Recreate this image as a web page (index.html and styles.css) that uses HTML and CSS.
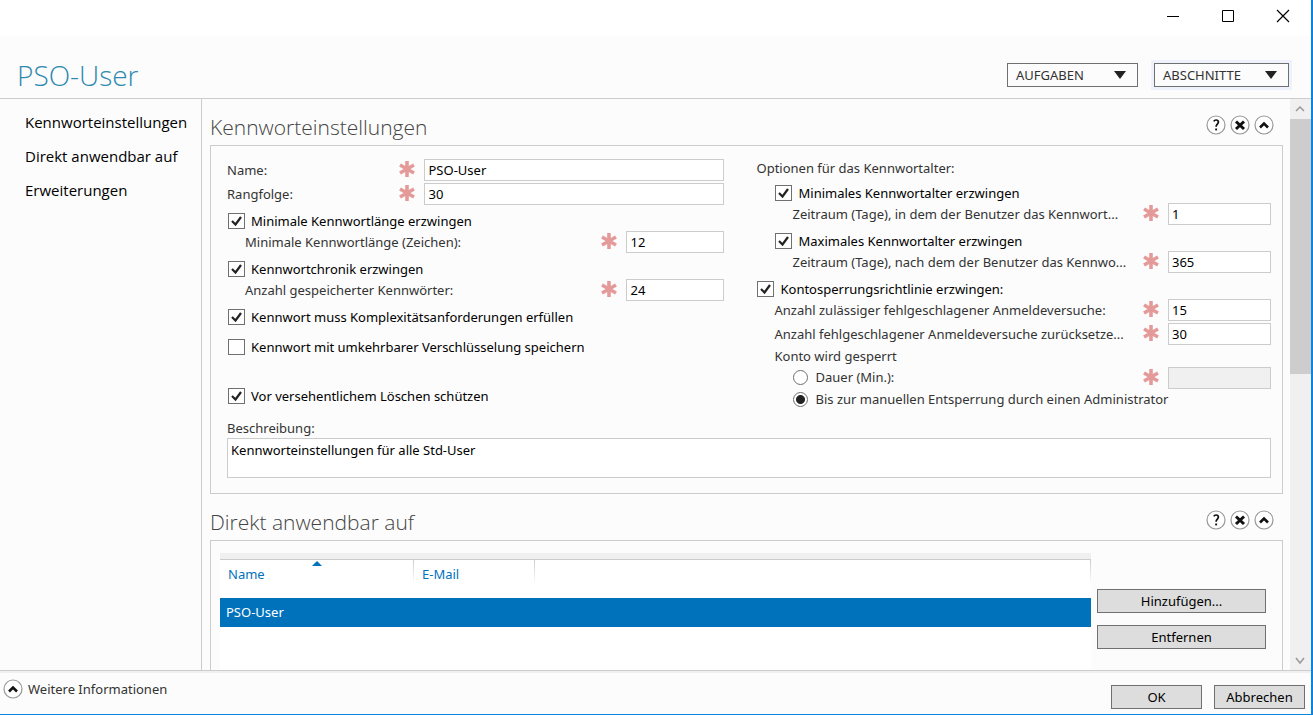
FILE: index.html
```html
<!DOCTYPE html>
<html lang="de">
<head>
    <meta charset="UTF-8">
    <meta name="viewport" content="width=device-width, initial-scale=1.0">
    <title>PSO-User</title>
    <link rel="stylesheet" href="styles.css">
</head>
<body>
    <!-- shared icons -->
    <svg class="defs" width="0" height="0">
        <symbol id="star" viewBox="0 0 18 18">
            <path d="M9 1v16M2 5l14 8M16 5L2 13" stroke="#e59a9a" stroke-width="3.6" fill="none"/>
        </symbol>
        <symbol id="help" viewBox="0 0 20 20">
            <circle cx="10" cy="10" r="9" fill="#fff" stroke="#999" stroke-width="1.2"/>
            <path d="M7.8 6.4C8.3 5.4 9 5 10 5c1.500 0 2.400.8 2.400 2.100 0 1.900-2.300 2.100-2.300 4.600" fill="none" stroke="#111" stroke-width="1.7"/>
            <path d="M9.200 13.500h1.900v1.900h-1.900z" fill="#111"/>
        </symbol>
        <symbol id="cross" viewBox="0 0 20 20">
            <circle cx="10" cy="10" r="9" fill="#fff" stroke="#999" stroke-width="1.2"/>
            <path d="M6 6.500l8 7.500M14 6.500L6 14" stroke="#111" stroke-width="3" fill="none"/>
        </symbol>
        <symbol id="up" viewBox="0 0 20 20">
            <circle cx="10" cy="10" r="9" fill="#fff" stroke="#999" stroke-width="1.2"/>
            <path d="M6 12.500l4-4 4 4" stroke="#111" stroke-width="2.600" fill="none"/>
        </symbol>
    </svg>

    <div class="window">
        <div class="titlebar">
            <button aria-label="Minimieren"><svg width="14" height="14"><path d="M1 7.500h12" stroke="#000"/></svg></button>
            <button aria-label="Maximieren"><svg width="14" height="14"><path d="M1.500 1.500h11v11h-11z" stroke="#000" fill="none"/></svg></button>
            <button aria-label="Schließen"><svg width="14" height="14"><path d="M1 1l12 12M13 1L1 13" stroke="#000" stroke-width="1.200"/></svg></button>
        </div>

        <header class="header">
            <h1>PSO-User</h1>
            <button class="menu">AUFGABEN <svg width="12" height="8"><path d="M0 0h12L6 8z" fill="#222"/></svg></button>
            <button class="menu focused">ABSCHNITTE <svg width="12" height="8"><path d="M0 0h12L6 8z" fill="#222"/></svg></button>
        </header>

        <div class="body">
            <nav class="sidebar">
                <a href="#settings">Kennworteinstellungen</a>
                <a href="#applies">Direkt anwendbar auf</a>
                <a href="#extensions">Erweiterungen</a>
            </nav>

            <main class="content">
                <section id="settings">
                    <div class="section-head">
                        <h2>Kennworteinstellungen</h2>
                        <button aria-label="Hilfe"><svg><use href="#help"/></svg></button>
                        <button aria-label="Entfernen"><svg><use href="#cross"/></svg></button>
                        <button aria-label="Reduzieren"><svg><use href="#up"/></svg></button>
                    </div>
                    <form class="panel">
                        <div class="columns">
                            <div class="left">
                                <div class="row">
                                    <label for="name">Name:</label>
                                    <svg class="star"><use href="#star"/></svg>
                                    <input type="text" id="name" class="wide" value="PSO-User">
                                </div>
                                <div class="row">
                                    <label for="rank">Rangfolge:</label>
                                    <svg class="star"><use href="#star"/></svg>
                                    <input type="text" id="rank" class="wide" value="30">
                                </div>
                                <label class="check"><input type="checkbox" checked>Minimale Kennwortlänge erzwingen</label>
                                <div class="row sub">
                                    <label for="minlen">Minimale Kennwortlänge (Zeichen):</label>
                                    <svg class="star"><use href="#star"/></svg>
                                    <input type="text" id="minlen" value="12">
                                </div>
                                <label class="check"><input type="checkbox" checked>Kennwortchronik erzwingen</label>
                                <div class="row sub">
                                    <label for="history">Anzahl gespeicherter Kennwörter:</label>
                                    <svg class="star"><use href="#star"/></svg>
                                    <input type="text" id="history" value="24">
                                </div>
                                <label class="check"><input type="checkbox" checked>Kennwort muss Komplexitätsanforderungen erfüllen</label>
                                <label class="check space"><input type="checkbox">Kennwort mit umkehrbarer Verschlüsselung speichern</label>
                                <label class="check space-big"><input type="checkbox" checked>Vor versehentlichem Löschen schützen</label>
                            </div>

                            <div class="right">
                                <div class="text">Optionen für das Kennwortalter:</div>
                                <div class="group">
                                    <label class="check"><input type="checkbox" checked>Minimales Kennwortalter erzwingen</label>
                                    <div class="row sub">
                                        <label for="minage">Zeitraum (Tage), in dem der Benutzer das Kennwort...</label>
                                        <svg class="star"><use href="#star"/></svg>
                                        <input type="text" id="minage" value="1">
                                    </div>
                                    <label class="check"><input type="checkbox" checked>Maximales Kennwortalter erzwingen</label>
                                    <div class="row sub">
                                        <label for="maxage">Zeitraum (Tage), nach dem der Benutzer das Kennwo...</label>
                                        <svg class="star"><use href="#star"/></svg>
                                        <input type="text" id="maxage" value="365">
                                    </div>
                                </div>
                                <label class="check"><input type="checkbox" checked>Kontosperrungsrichtlinie erzwingen:</label>
                                <div class="row sub">
                                    <label for="attempts">Anzahl zulässiger fehlgeschlagener Anmeldeversuche:</label>
                                    <svg class="star"><use href="#star"/></svg>
                                    <input type="text" id="attempts" value="15">
                                </div>
                                <div class="row sub">
                                    <label for="reset">Anzahl fehlgeschlagener Anmeldeversuche zurücksetze...</label>
                                    <svg class="star"><use href="#star"/></svg>
                                    <input type="text" id="reset" value="30">
                                </div>
                                <div class="text sub">Konto wird gesperrt</div>
                                <div class="row radio">
                                    <label><input type="radio" name="lock">Dauer (Min.):</label>
                                    <svg class="star"><use href="#star"/></svg>
                                    <input type="text" aria-label="Dauer (Min.)" disabled>
                                </div>
                                <div class="row radio">
                                    <label><input type="radio" name="lock" checked>Bis zur manuellen Entsperrung durch einen Administrator</label>
                                </div>
                            </div>
                        </div>
                        <label class="desc-label" for="desc">Beschreibung:</label>
                        <textarea id="desc">Kennworteinstellungen für alle Std-User</textarea>
                    </form>
                </section>

                <section id="applies">
                    <div class="section-head">
                        <h2>Direkt anwendbar auf</h2>
                        <button aria-label="Hilfe"><svg><use href="#help"/></svg></button>
                        <button aria-label="Entfernen"><svg><use href="#cross"/></svg></button>
                        <button aria-label="Reduzieren"><svg><use href="#up"/></svg></button>
                    </div>
                    <div class="panel list">
                        <div class="table-box">
                            <table>
                                <thead>
                                    <tr>
                                        <th class="col-name sorted">Name</th>
                                        <th class="col-mail">E-Mail</th>
                                        <th></th>
                                    </tr>
                                </thead>
                                <tbody>
                                    <tr>
                                        <td>PSO-User</td>
                                        <td></td>
                                        <td></td>
                                    </tr>
                                </tbody>
                            </table>
                        </div>
                        <div class="actions">
                            <button class="btn">Hinzufügen...</button>
                            <button class="btn">Entfernen</button>
                        </div>
                    </div>
                </section>
            </main>

            <div class="scrollbar">
                <svg width="20" height="20"><path d="M6 12l4-4 4 4" stroke="#999" stroke-width="1.500" fill="none"/></svg>
                <div class="track"><div class="thumb"></div></div>
                <svg width="20" height="20"><path d="M6 8l4 5 4-5" stroke="#999" stroke-width="1.500" fill="none"/></svg>
            </div>
        </div>

        <footer class="footer">
            <button class="more"><svg><use href="#up"/></svg>Weitere Informationen</button>
            <button class="btn">OK</button>
            <button class="btn">Abbrechen</button>
        </footer>
    </div>
</body>
</html>
```

FILE: styles.css
```css
* {
    box-sizing: border-box;
}
body {
    margin: 0;
    font-family: "Noto Sans", "Open Sans", sans-serif;
    font-size: 13px;
    line-height: 18px;
    color: #333;
}
button, input, textarea {
    font: inherit;
    color: #000;
}
button {
    padding: 0;
    border: none;
    background: none;
}
.defs {
    position: absolute;
}
.window {
    display: flex;
    flex-direction: column;
    height: 100vh;
    background: #fcfcfc;
    border-right: 2px solid #0a84dc;
    border-bottom: 1px solid #0a84dc;
}

/* title bar */
.titlebar {
    display: flex;
    justify-content: flex-end;
    flex: none;
    height: 36px;
    padding: 0 1px 4px 0;
    background: #fff;
}
.titlebar button {
    display: flex;
    justify-content: center;
    align-items: center;
    width: 55px;
}
.header {
    display: flex;
    align-items: center;
    flex: none;
    gap: 16px;
    height: 63px;
    padding: 16px 22px 0 17px;
    border-bottom: 1px solid #ccc;
}
h1, h2, .sidebar {
    font-family: "Open Sans", "Noto Sans", sans-serif;
}
h1 {
    flex: 1;
    margin: 0;
    font-size: 28px;
    line-height: 36px;
    font-weight: 300;
    color: #2d8aaf;
}
.menu {
    display: flex;
    justify-content: space-between;
    align-items: center;
    width: 131px;
    height: 24px;
    padding: 0 11px 0 8px;
    border: 1px solid #707070;
    color: #333;
}
.menu.focused {
    width: 135px;
    box-shadow: 0 0 0 3px #eef2fd;
}

/* navigation and content */
.body {
    display: flex;
    flex: 1;
    min-height: 0;
}
.sidebar {
    display: flex;
    flex-direction: column;
    flex: none;
    gap: 14px;
    width: 202px;
    padding: 13px 0 0 25px;
    border-right: 1px solid #ccc;
}
.sidebar a {
    font-size: 15px;
    line-height: 20px;
    color: #000;
    text-decoration: none;
}
.content {
    flex: 1;
    min-width: 0;
    padding: 0 7px 0 8px;
    overflow: hidden;
}
.section-head {
    display: flex;
    align-items: center;
    gap: 4px;
    height: 46px;
    padding: 6px 9px 0 0;
}
.section-head svg {
    display: block;
    width: 20px;
    height: 20px;
}
h2 {
    flex: 1;
    margin: 0;
    padding-top: 3px;
    font-size: 21px;
    line-height: 28px;
    font-weight: 300;
    color: #444;
}
.panel {
    padding: 13px 11px 15px 16px;
    border: 1px solid #ccc;
}

/* form */
.columns {
    display: grid;
    grid-template-columns: 497fr 514fr;
    gap: 32px;
}
.row {
    display: flex;
    height: 24px;
}
.row label {
    flex: 1;
    line-height: 22px;
    white-space: nowrap;
}
.star {
    flex: none;
    width: 18px;
    height: 18px;
    margin: 1px 8px 0 0;
}
.row input[type="text"] {
    width: 98px;
    height: 22px;
    padding: 0 3px;
    border: 1px solid #ccc;
    background: #fff;
}
.row input.wide {
    width: 300px;
}
.right .row input[type="text"] {
    width: 103px;
}
.row input[type="text"]:disabled {
    background: #f0f0f0;
}
.check {
    display: flex;
    align-items: center;
    height: 24px;
    padding-top: 3px;
    color: #000;
}
.space {
    margin-top: 6px;
}
.space-big {
    margin-top: 25px;
}
.sub {
    padding-left: 18px;
}
.group {
    padding-left: 18px;
}
.text {
    height: 20px;
}
input[type="checkbox"] {
    appearance: none;
    width: 17px;
    height: 16px;
    margin: 0 6px 0 1px;
    border: 1px solid #707070;
    background: #fff;
}
input[type="checkbox"]:checked {
    background: #fff url("data:image/svg+xml,%3Csvg xmlns='http://www.w3.org/2000/svg' viewBox='0 0 15 14'%3E%3Cpath d='M3 7l3.500 3.500L12 3' stroke='%23222' stroke-width='2.200' fill='none'/%3E%3C/svg%3E");
}
.radio {
    height: 22px;
    padding-left: 37px;
}
.radio label {
    display: flex;
    align-items: center;
    height: 20px;
}
input[type="radio"] {
    appearance: none;
    width: 15px;
    height: 15px;
    margin: 0 7px 0 0;
    border: 1px solid #707070;
    border-radius: 50%;
    background: #fff;
}
input[type="radio"]:checked {
    background: radial-gradient(circle, #222 4px, #fff 5px);
}
.desc-label {
    display: block;
    margin-top: 7px;
    line-height: 20px;
}
textarea {
    display: block;
    width: 100%;
    height: 40px;
    padding: 2px 3px;
    border: 1px solid #ccc;
    background: #fff;
    resize: none;
}

/* list */
.list {
    display: flex;
    gap: 6px;
    padding: 12px 16px 0 9px;
}
.table-box {
    flex: 1;
    height: 200px;
    border-top: 6px solid #f0f0f0;
    background: #fff;
}
table {
    width: 100%;
    table-layout: fixed;
    border-collapse: collapse;
}
th {
    height: 38px;
    padding: 5px 8px 0;
    border-top: 1px solid #ccc;
    vertical-align: top;
    text-align: left;
    font-weight: 400;
    color: #0072bc;
    background: linear-gradient(#ccc, #fff) right top / 1px 24px no-repeat;
}
.col-name {
    width: 194px;
}
.col-mail {
    width: 121px;
}
.sorted {
    background: linear-gradient(#ccc, #fff) right top / 1px 24px no-repeat,
        url("data:image/svg+xml,%3Csvg xmlns='http://www.w3.org/2000/svg' width='10' height='5'%3E%3Cpath d='M0 5l5-5 5 5z' fill='%230072bc'/%3E%3C/svg%3E") center top 1px no-repeat;
}
td {
    height: 29px;
    padding: 0 6px;
    color: #fff;
    background: #0072bc;
}
.actions {
    display: flex;
    flex-direction: column;
    gap: 12px;
    width: 169px;
    padding-top: 36px;
}
.btn {
    height: 24px;
    border: 1px solid #707070;
    background: #ddd;
}

/* scrollbar */
.scrollbar {
    display: flex;
    flex-direction: column;
    flex: none;
    width: 21px;
    background: #f0f0f0;
}
.track {
    flex: 1;
}
.thumb {
    height: 48%;
    background: #cdcdcd;
}

.footer {
    display: flex;
    align-items: center;
    flex: none;
    gap: 12px;
    height: 44px;
    padding: 8px 6px 0 3px;
    border-top: 1px solid #ccc;
    box-shadow: inset 0 2px #f0f0f0;
}
.footer .btn {
    width: 91px;
}
.more {
    display: flex;
    align-items: center;
    gap: 5px;
    margin: 0 auto 16px 0;
    color: #333;
}
.more svg {
    width: 20px;
    height: 20px;
}
```
